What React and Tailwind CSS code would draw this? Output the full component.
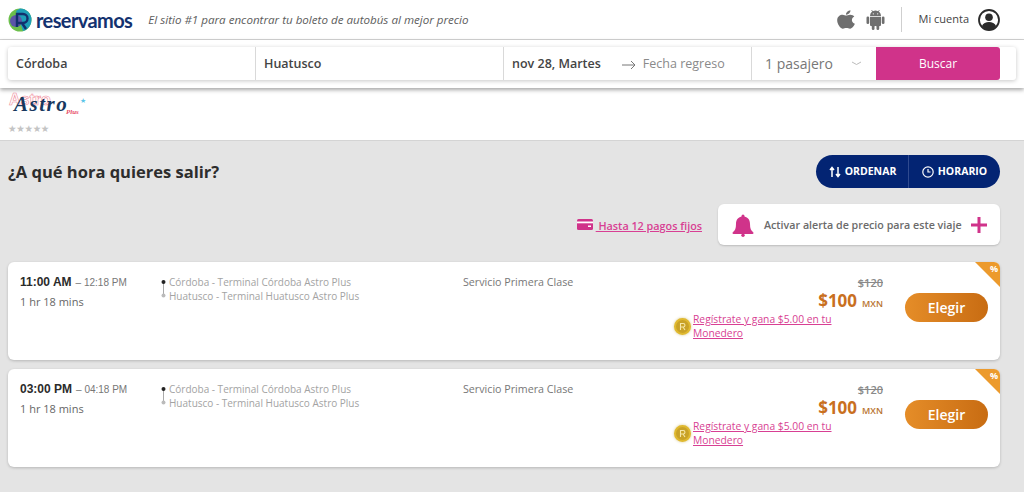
import React from "react";

function LogoMark() {
  return (
    <svg width="24" height="24" viewBox="0 0 24 24" className="shrink-0">
      <circle cx="12" cy="12" r="11.5" fill="#6cbf4b" />
      <path d="M12 .5A11.5 11.5 0 0 1 23.5 12 11.5 11.5 0 0 1 15 23L8 3z" fill="#1e9fb8" />
      <circle cx="8" cy="13" r="6" fill="#5b55a8" />
      <path d="M9 19V6h6a4 4 0 0 1 0 9H9M14 15l4 6" fill="none" stroke="#12306e" strokeWidth="2.4" />
    </svg>
  );
}

function Apple() {
  return (
    <svg width="18" height="21" viewBox="0 0 384 512" fill="#6f6f6f" preserveAspectRatio="none">
      <path d="M318.7 268.7c-.2-36.7 16.4-64.4 50-84.8-18.8-26.9-47.2-41.7-84.7-44.6-35.5-2.8-74.3 20.7-88.5 20.7-15 0-49.4-19.7-76.4-19.7C63.3 141.2 4 184.8 4 273.5q0 39.3 14.4 81.2c12.8 36.7 59 126.7 107.2 125.2 25.2-.6 43-17.9 75.8-17.9 31.8 0 48.3 17.9 76.4 17.9 48.6-.7 90.4-82.5 102.6-119.3-65.2-30.7-61.7-90-61.7-91.9zm-56.6-164.2c27.3-32.4 24.8-61.9 24-72.5-24.1 1.4-52 16.4-67.9 34.9-17.5 19.8-27.8 44.3-25.6 71.9 26.1 2 49.9-11.4 69.5-34.3z" />
    </svg>
  );
}

function Android() {
  return (
    <svg width="19" height="21" viewBox="0 0 19 21" fill="#6f6f6f">
      <path d="M4 7a5.5 5.5 0 0 1 11 0z" />
      <path d="M5.6 1l1.4 2.4M13.4 1L12 3.4" stroke="#6f6f6f" strokeWidth=".8" />
      <circle cx="7.3" cy="4.8" r=".6" fill="#fff" />
      <circle cx="11.7" cy="4.8" r=".6" fill="#fff" />
      <path d="M4 7.7h11V16a1 1 0 0 1-1 1H5a1 1 0 0 1-1-1z" />
      <rect x="0.5" y="7.5" width="2.7" height="7.5" rx="1.35" />
      <rect x="15.8" y="7.5" width="2.7" height="7.5" rx="1.35" />
      <rect x="5.8" y="16" width="2.7" height="5" rx="1.35" />
      <rect x="10.5" y="16" width="2.7" height="5" rx="1.35" />
    </svg>
  );
}

function Account() {
  return (
    <svg width="22" height="22" viewBox="0 0 22 22">
      <circle cx="11" cy="11" r="10" fill="none" stroke="#2b2b2b" strokeWidth="1.8" />
      <circle cx="11" cy="8.2" r="3.8" fill="#2b2b2b" />
      <path d="M3.8 17.2C5 14.2 8 13 11 13s6 1.2 7.2 4.2C16 19.8 13.5 21 11 21s-5-1.2-7.2-3.8z" fill="#2b2b2b" />
    </svg>
  );
}

function Coin() {
  return (
    <div className="w-[17px] h-[17px] rounded-full bg-[#c9a227] border-2 border-[#e0b92f] shrink-0 flex items-center justify-center shadow-[0_0_3px_#d8c98c]">
      <svg width="9" height="9" viewBox="0 0 9 9">
        <path d="M2.5 8V1.5h2.7a1.7 1.7 0 0 1 0 3.5H2.5M5 5l2 3" fill="none" stroke="#f6e7a8" strokeWidth="1.1" />
      </svg>
    </div>
  );
}

function Card({ dep, arr }) {
  return (
    <div className="relative overflow-hidden h-[98px] bg-white rounded-md shadow-[0_1px_3px_rgba(0,0,0,0.2)] flex">
      <div className="w-[153px] pl-3 pt-[12px] shrink-0">
        <div className="flex items-baseline h-[17px]">
          <span className="text-[12px] leading-[17px] font-bold text-[#2b2b2b] font-['Liberation_Sans',sans-serif]">{dep}</span>
          <span className="text-[10px] text-[#777] ml-1 font-['Liberation_Sans',sans-serif]">– {arr}</span>
        </div>
        <div className="text-[11px] leading-[15px] text-[#666] mt-[3px]">1 hr 18 mins</div>
      </div>
      <div className="w-[302px] pt-[13px] flex shrink-0">
        <svg width="8" height="26" viewBox="0 0 8 26" className="mt-[1px] shrink-0">
          <line x1="2.5" y1="6" x2="2.5" y2="18" stroke="#aaa" />
          <circle cx="2.5" cy="6" r="2" fill="#222" />
          <circle cx="2.5" cy="19.5" r="2" fill="#bbb" />
        </svg>
        <div className="text-[10px] leading-[14px] text-[#a3a3a3]">
          <div>Córdoba - Terminal Córdoba Astro Plus</div>
          <div>Huatusco - Terminal Huatusco Astro Plus</div>
        </div>
      </div>
      <div className="w-[200px] pt-[13px] text-[10.7px] leading-[14px] text-[#777] shrink-0">Servicio Primera Clase</div>
      <div className="w-[220px] shrink-0 pt-[14px] flex flex-col items-end">
        <div className="text-[11px] leading-[14px] text-[#8a8a8a] line-through font-semibold">$120</div>
        <div className="flex items-baseline gap-[5px] mt-[-1px] leading-[24px]">
          <span className="text-[17px] font-bold text-[#c9701f]">$100</span>
          <span className="text-[9px] text-[#b8732f] font-semibold">MXN</span>
        </div>
        <div className="flex items-center gap-[2px] self-start ml-[11px] mt-[-4px]">
          <Coin />
          <div className="text-[10.3px] leading-[14px] text-[#d83f93] underline w-[150px]">Regístrate y gana $5.00 en tu Monedero</div>
        </div>
      </div>
      <div className="flex-1 pt-[31px] pl-[22px]">
        <div className="w-[83px] h-[29px] rounded-full bg-gradient-to-r from-[#e58d28] to-[#c86c12] text-white text-[14px] font-semibold flex items-center justify-center">Elegir</div>
      </div>
      <div className="absolute top-0 right-0 w-0 h-0 border-t-[25px] border-l-[25px] border-t-[#ec9a2c] border-l-transparent" />
      <span className="absolute top-[1px] right-[2px] text-[9px] leading-[12px] font-bold text-white">%</span>
    </div>
  );
}

export default function App() {
  return (
    <div className="w-[1024px] h-[492px] overflow-hidden bg-[#e4e4e4] font-['Open_Sans',sans-serif]">
      <header className="h-10 bg-white border-b border-[#d4d4d4] flex items-center pl-2 pr-6">
        <LogoMark />
        <span className="ml-[4px] text-[20px] font-bold leading-none text-[#14326f] tracking-[-0.6px] font-['Lato',sans-serif]">reservamos</span>
        <span className="ml-[16px] text-[11.6px] italic text-[#5d5d5d]">El sitio #1 para encontrar tu boleto de autobús al mejor precio</span>
        <div className="ml-auto flex items-center">
          <Apple />
          <div className="ml-[11px]"><Android /></div>
          <div className="ml-[16px] w-px h-[25px] bg-[#cfcfcf]" />
          <span className="ml-[17px] pb-[1px] text-[11px] text-[#444]">Mi cuenta</span>
          <div className="ml-[9px]"><Account /></div>
        </div>
      </header>

      <div className="relative h-12 bg-white shadow-[0_2px_4px_rgba(0,0,0,0.35)] pt-[7px] px-2">
        <div className="h-[33px] flex rounded-[3px] shadow-[0_1px_4px_rgba(0,0,0,0.22)] text-[12.5px] text-[#444] font-semibold">
          <div className="w-[248px] flex items-center pl-2 pt-[2px] border-r border-[#d9d9d9]">Córdoba</div>
          <div className="w-[248px] flex items-center pl-2 pt-[2px] border-r border-[#d9d9d9]">Huatusco</div>
          <div className="w-[248px] flex items-center pl-2 pt-[2px] border-r border-[#d9d9d9]">
            <span>nov 28, Martes</span>
            <svg width="14" height="10" viewBox="0 0 14 10" className="ml-[21px]" fill="none" stroke="#777" strokeWidth="1">
              <path d="M0 5h13M9 1l4 4-4 4" />
            </svg>
            <span className="ml-[7px] text-[#8a8a8a] font-normal">Fecha regreso</span>
          </div>
          <div className="w-[124px] flex items-center pl-[13px] pr-[15px] text-[14px] font-normal text-[#777]">
            <span>1 pasajero</span>
            <svg width="9" height="5" viewBox="0 0 9 5" className="ml-auto" fill="none" stroke="#bbb">
              <path d="M0 1l4.5 2.5L9 1" />
            </svg>
          </div>
          <div className="w-[124px] flex items-center justify-center pt-[1px] bg-[#d0338a] rounded-r-[3px] text-white font-normal text-[12px]">Buscar</div>
        </div>
      </div>

      <div className="h-[53px] bg-white border-b border-[#d4d4d4] pl-2">
        <div className="relative h-[30px] w-[80px]">
          <span className="absolute left-[1px] top-[3px] text-[16px] font-bold leading-[18px] text-transparent [-webkit-text-stroke:0.6px_#ef8a9a] font-['Liberation_Sans',sans-serif]">Astro</span>
          <span className="absolute left-[6px] top-[5px] text-[21px] italic font-bold leading-[22px] tracking-[1.5px] text-[#17375e] font-['Liberation_Serif',serif]">Astro</span>
          <span className="absolute left-[58px] top-[20px] text-[7px] italic font-bold leading-[8px] text-[#e8506a] font-['Liberation_Serif',serif]">Plus</span>
          <span className="absolute left-[72px] top-[9px] text-[7px] leading-[8px] text-[#5cc5e8]">★</span>
        </div>
        <div className="text-[9.5px] leading-[10px] tracking-[-0.3px] text-[#c4c4c4] mt-[6px] font-['DejaVu_Sans',sans-serif]">★★★★★</div>
      </div>

      <div className="pl-2 pr-6 pt-[14px] flex items-center justify-between h-[47px]">
        <h1 className="text-[16.5px] pt-[1px] font-bold text-[#2d2d2d]">¿A qué hora quieres salir?</h1>
        <div className="w-[184px] h-[33px] rounded-full bg-[#032473] flex text-white text-[10.5px] font-bold">
          <div className="w-[93px] flex items-center justify-center gap-[4px] border-r border-[#2f4a8f] pl-[1px]">
            <svg width="12" height="12" viewBox="0 0 12 12" fill="none" stroke="#fff" strokeWidth="1.5">
              <path d="M3 11V2M1 4l2-2.5L5 4M9 1v9M7 8l2 2.5L11 8" />
            </svg>
            ORDENAR
          </div>
          <div className="flex-1 flex items-center justify-center gap-[4px]">
            <svg width="12" height="12" viewBox="0 0 12 12" fill="none" stroke="#fff" strokeWidth="1.2">
              <circle cx="6" cy="6" r="5.2" />
              <path d="M6 3v3h2.5" />
            </svg>
            HORARIO
          </div>
        </div>
      </div>

      <div className="flex justify-end items-center pr-6 pt-[16px] h-[57px]">
        <svg width="16" height="11" viewBox="0 0 16 11">
          <rect width="16" height="11" rx="1.5" fill="#d0338a" />
          <rect y="2.5" width="16" height="1.8" fill="#fff" />
          <rect x="11" y="6.5" width="3" height="1.5" fill="#fff" />
        </svg>
        <span className="ml-[3px] pt-[3px] text-[10.8px] font-semibold text-[#d83f93] underline mr-[16px] whitespace-pre"> Hasta 12 pagos fijos</span>
        <div className="w-[282px] h-[41px] bg-white rounded-md shadow-[0_1px_2px_rgba(0,0,0,0.18)] flex items-center pl-[14px] pr-[13px]">
          <svg width="22" height="24" viewBox="0 0 22 24" fill="#d0338a">
            <path d="M11 1.5a1.5 1.5 0 0 1 1.5 1.5v.6C16 4.4 18 7.2 18 11c0 4.5 1 6.5 3 8H1c2-1.5 3-3.5 3-8 0-3.8 2-6.6 5.5-7.4V3A1.5 1.5 0 0 1 11 1.5z" />
            <rect x="0.5" y="19" width="21" height="2" rx="1" />
            <circle cx="11" cy="22.3" r="1.7" />
          </svg>
          <span className="ml-[10px] pt-[2px] text-[10.7px] font-semibold text-[#6b6b6b]">Activar alerta de precio para este viaje</span>
          <svg width="16" height="16" viewBox="0 0 16 16" className="ml-auto" stroke="#d0338a" strokeWidth="3">
            <path d="M8 0v16M0 8h16" />
          </svg>
        </div>
      </div>

      <div className="flex flex-col gap-[9px] mt-[17px] ml-2 mr-6">
        <Card dep="11:00 AM" arr="12:18 PM" />
        <Card dep="03:00 PM" arr="04:18 PM" />
      </div>
    </div>
  );
}
